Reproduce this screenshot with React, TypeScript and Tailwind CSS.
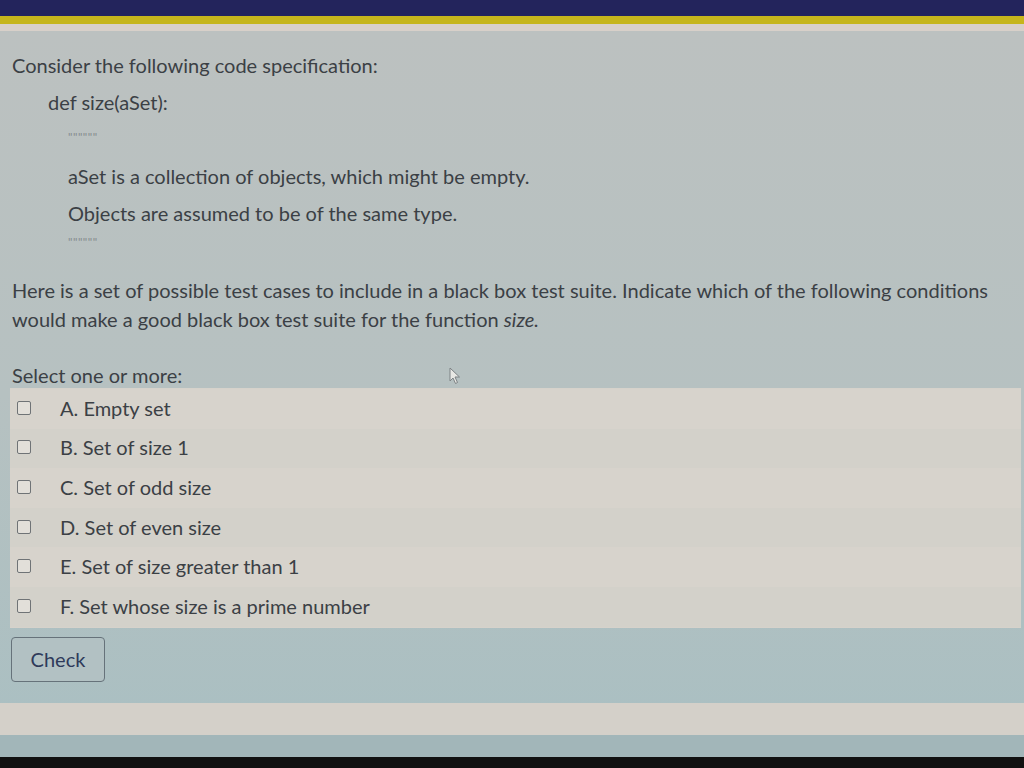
import React from "react";

const options = [
  "A. Empty set",
  "B. Set of size 1",
  "C. Set of odd size",
  "D. Set of even size",
  "E. Set of size greater than 1",
  "F. Set whose size is a prime number",
];

export default function App() {
  return (
    <div
      className="relative w-[1024px] h-[768px] overflow-hidden flex flex-col text-[#3b4045]"
      style={{ fontFamily: "Lato, 'Open Sans', sans-serif" }}
    >
      <div className="h-[16px] bg-[#23245c]" />
      <div className="h-[8px] bg-[#c6b51c]" />
      <div className="h-[7px] bg-[#d8d0c9]" />
      <div className="flex-1 flex flex-col bg-gradient-to-b from-[#bcc1c0] via-[#b6c1c1] to-[#a9bfc2]">
        <div className="pl-[12px] pt-[21px] text-[20px] leading-[26px]">
          Consider the following code specification:
        </div>
        <div className="pl-[48px] pt-[11px] text-[20px] leading-[26px]">def size(aSet):</div>
        <div className="pl-[68px] pt-[14px] text-[12px] leading-[16px] text-[#858b8e] tracking-[0.5px]">
          """"""
        </div>
        <div className="pl-[68px] pt-[18px] text-[20px] leading-[26px]">
          aSet is a collection of objects, which might be empty.
        </div>
        <div className="pl-[68px] pt-[11px] text-[20px] leading-[26px]">
          Objects are assumed to be of the same type.
        </div>
        <div className="pl-[68px] pt-[8px] text-[12px] leading-[16px] text-[#858b8e] tracking-[0.5px]">
          """"""
        </div>
        <div className="pl-[12px] pr-[20px] pt-[26px] text-[20px] leading-[29px]">
          Here is a set of possible test cases to include in a black box test suite. Indicate which of
          the following conditions would make a good black box test suite for the function <em>size.</em>
        </div>
        <div className="pl-[12px] pt-[28px] text-[20px] leading-[26px]">Select one or more:</div>
        <div className="ml-[10px] mr-[3px] flex flex-col bg-[#d6d2cb] py-[1px]">
          {options.map((o, i) => (
            <div
              key={o}
              className={`h-[39.6px] pb-[2px] flex items-center ${i % 2 === 1 ? "bg-[#d3d1ca]" : "bg-[#d7d3cc]"}`}
            >
              <div className="ml-[7px] w-[14px] h-[14px] border-[1.5px] border-[#6f7376] rounded-[2px] bg-[#e2dfd9]" />
              <span className="ml-[29px] text-[20px] leading-[26px]">{o}</span>
            </div>
          ))}
        </div>
        <div className="pl-[11px] pt-[9px]">
          <button className="w-[94px] h-[45px] border border-[#66727a] rounded-[4px] bg-[#b2c1c3] text-[20px] text-[#2e3a5a]">
            Check
          </button>
        </div>
        <div className="flex-1" />
        <div className="h-[32px] bg-[#d4d0c9]" />
        <div className="h-[22px] bg-[#a2b6b9]" />
      </div>
      <div className="h-[11px] bg-[#111111]" />
      <svg className="absolute left-[449px] top-[367px]" width="12" height="18" viewBox="0 0 12 18">
        <path d="M1 1 L1 14 L4 11 L6.5 16.5 L8.5 15.5 L6 10 L10.5 10 Z" fill="#e8e8e4" stroke="#7d8285" strokeWidth="1" />
      </svg>
    </div>
  );
}
